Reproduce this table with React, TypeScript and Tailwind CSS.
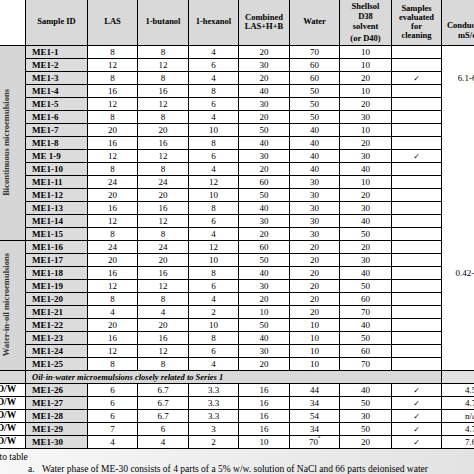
import React from 'react';

type Row = {
  id: string;
  vals: string[];
  check?: boolean;
};

const series1: Row[] = [
  { id: 'ME1-1', vals: ['8', '8', '4', '20', '70', '10'] },
  { id: 'ME1-2', vals: ['12', '12', '6', '30', '60', '10'] },
  { id: 'ME1-3', vals: ['8', '8', '4', '20', '60', '20'], check: true },
  { id: 'ME1-4', vals: ['16', '16', '8', '40', '50', '10'] },
  { id: 'ME1-5', vals: ['12', '12', '6', '30', '50', '20'] },
  { id: 'ME1-6', vals: ['8', '8', '4', '20', '50', '30'] },
  { id: 'ME1-7', vals: ['20', '20', '10', '50', '40', '10'] },
  { id: 'ME1-8', vals: ['16', '16', '8', '40', '40', '20'] },
  { id: 'ME 1-9', vals: ['12', '12', '6', '30', '40', '30'], check: true },
  { id: 'ME1-10', vals: ['8', '8', '4', '20', '40', '40'] },
  { id: 'ME1-11', vals: ['24', '24', '12', '60', '30', '10'] },
  { id: 'ME1-12', vals: ['20', '20', '10', '50', '30', '20'] },
  { id: 'ME1-13', vals: ['16', '16', '8', '40', '30', '30'] },
  { id: 'ME1-14', vals: ['12', '12', '6', '30', '30', '40'] },
  { id: 'ME1-15', vals: ['8', '8', '4', '20', '30', '50'] },
  { id: 'ME1-16', vals: ['24', '24', '12', '60', '20', '20'] },
  { id: 'ME1-17', vals: ['20', '20', '10', '50', '20', '30'] },
  { id: 'ME1-18', vals: ['16', '16', '8', '40', '20', '40'] },
  { id: 'ME1-19', vals: ['12', '12', '6', '30', '20', '50'] },
  { id: 'ME1-20', vals: ['8', '8', '4', '20', '20', '60'] },
  { id: 'ME1-21', vals: ['4', '4', '2', '10', '20', '70'] },
  { id: 'ME1-22', vals: ['20', '20', '10', '50', '10', '40'] },
  { id: 'ME1-23', vals: ['16', '16', '8', '40', '10', '50'] },
  { id: 'ME1-24', vals: ['12', '12', '6', '30', '10', '60'] },
  { id: 'ME1-25', vals: ['8', '8', '4', '20', '10', '70'] },
];

const related = [
  { id: 'ME1-26', vals: ['6', '6.7', '3.3', '16', '44', '40'], cond: '4.5' },
  { id: 'ME1-27', vals: ['6', '6.7', '3.3', '16', '34', '50'], cond: '4.7' },
  { id: 'ME1-28', vals: ['6', '6.7', '3.3', '16', '54', '30'], cond: 'n/a' },
  { id: 'ME1-29', vals: ['7', '6', '3', '16', '34', '50'], cond: '4.7' },
  { id: 'ME1-30', vals: ['4', '4', '2', '10', '70', '20'], cond: '7.6', sup: true },
];

// conductivity is merged over blocks of rows
const condSpans: Record<number, { span: number; text: string }> = {
  0: { span: 5, text: '6.1-6.4' },
  5: { span: 10, text: '' },
  15: { span: 5, text: '0.42-0.6' },
  20: { span: 5, text: '' },
};

const cell = 'border border-black text-center align-middle p-0';
const idCell = 'border border-black bg-[#dcdcdc] text-left pl-[6px] font-bold align-middle p-0';

const Check = () => <span className="text-[8px] font-['DejaVu_Sans',sans-serif]">✓</span>;

const App = () => {
  return (
    <div className="w-[474px] h-[474px] overflow-hidden bg-white text-black font-['Liberation_Serif',serif]">
      <div className="-mt-[3px] -ml-[13px] w-[512px]">
        <table className="table-fixed border-collapse w-[512px] leading-none">
          <colgroup>
            <col className="w-[38px]" />
            <col className="w-[62px]" />
            <col className="w-[50px]" />
            <col className="w-[51px]" />
            <col className="w-[50px]" />
            <col className="w-[51px]" />
            <col className="w-[50px]" />
            <col className="w-[52px]" />
            <col className="w-[50px]" />
            <col className="w-[58px]" />
          </colgroup>
          <thead>
            <tr className="h-[48px] text-[8.5px] font-bold">
              <th className="border-b border-r border-black bg-white"></th>
              <th className={`${cell} bg-[#d9d9d9]`}>Sample ID</th>
              <th className={`${cell} bg-[#d9d9d9]`}>LAS</th>
              <th className={`${cell} bg-[#d9d9d9]`}>1-butanol</th>
              <th className={`${cell} bg-[#d9d9d9]`}>1-hexanol</th>
              <th className={`${cell} bg-[#d9d9d9] leading-[9px]`}>
                Combined
                <br />
                LAS+H+B
              </th>
              <th className={`${cell} bg-[#d9d9d9]`}>Water</th>
              <th className={`${cell} bg-[#d9d9d9] leading-[10px]`}>
                Shellsol
                <br />
                D38
                <br />
                solvent
                <div className="mt-[2px]">(or D40)</div>
              </th>
              <th className={`${cell} bg-[#d9d9d9] leading-[9px]`}>
                Samples
                <br />
                evaluated
                <br />
                for
                <br />
                cleaning
              </th>
              <th className={`${cell} bg-[#d9d9d9] leading-[10px] pt-[16px]`}>
                Conductivity
                <br />
                mS/cm
              </th>
            </tr>
          </thead>
          <tbody className="text-[9px]">
            {series1.map((row, i) => (
              <tr key={row.id} className="h-[13px]">
                {i === 0 && (
                  <td rowSpan={15} className="border border-black bg-[#d6d6d6] text-center align-middle">
                    <span className="inline-block [writing-mode:vertical-rl] rotate-180 font-bold text-[8.5px] text-[#333]">
                      Bicontinuous microemulsions
                    </span>
                  </td>
                )}
                {i === 15 && (
                  <td rowSpan={10} className="border border-black bg-[#d6d6d6] text-center align-middle">
                    <span className="inline-block [writing-mode:vertical-rl] rotate-180 font-bold text-[8.5px] text-[#333]">
                      Water-in-oil microemulsions
                    </span>
                  </td>
                )}
                <td className={idCell}>{row.id}</td>
                {row.vals.map((v, j) => (
                  <td key={j} className={cell}>
                    {v}
                  </td>
                ))}
                <td className={cell}>{row.check && <Check />}</td>
                {condSpans[i] && (
                  <td
                    rowSpan={condSpans[i].span}
                    className="border-x border-black text-center align-middle p-0"
                  >
                    {condSpans[i].text}
                  </td>
                )}
              </tr>
            ))}
            <tr className="h-[13px]">
              <td className="border border-black bg-[#d9d9d9]"></td>
              <td colSpan={8} className="border border-black bg-[#d9d9d9] pl-[6px] text-left text-[8.5px] font-bold italic">
                Oil-in-water microemulsions closely related to Series 1
              </td>
              <td className="border border-black bg-[#e2e2e2]"></td>
            </tr>
            {related.map((row) => (
              <tr key={row.id} className="h-[13px]">
                <td className="border border-black bg-white text-center font-bold text-[9.5px]">O/W</td>
                <td className={idCell}>{row.id}</td>
                {row.vals.map((v, j) => (
                  <td key={j} className={cell}>
                    {v}
                    {row.sup && j === 4 && <sup className="text-[5px] align-super">a</sup>}
                  </td>
                ))}
                <td className={cell}>
                  <Check />
                </td>
                <td className={cell}>{row.cond}</td>
              </tr>
            ))}
          </tbody>
        </table>
        <div className="bg-gradient-to-r from-[#f8f8f8] to-[#e2e2e2] pt-[3px] pb-[10px] text-[9.5px] leading-[11px]">
          <div className="-ml-[12px]">Notes to table</div>
          <div className="flex mt-[1px]">
            <span className="w-[55px] pl-[41px]">a.</span>
            <span>Water phase of ME-30 consists of 4 parts of a 5% w/w. solution of NaCl and 66 parts deionised water</span>
          </div>
        </div>
      </div>
    </div>
  );
};

export default App;
